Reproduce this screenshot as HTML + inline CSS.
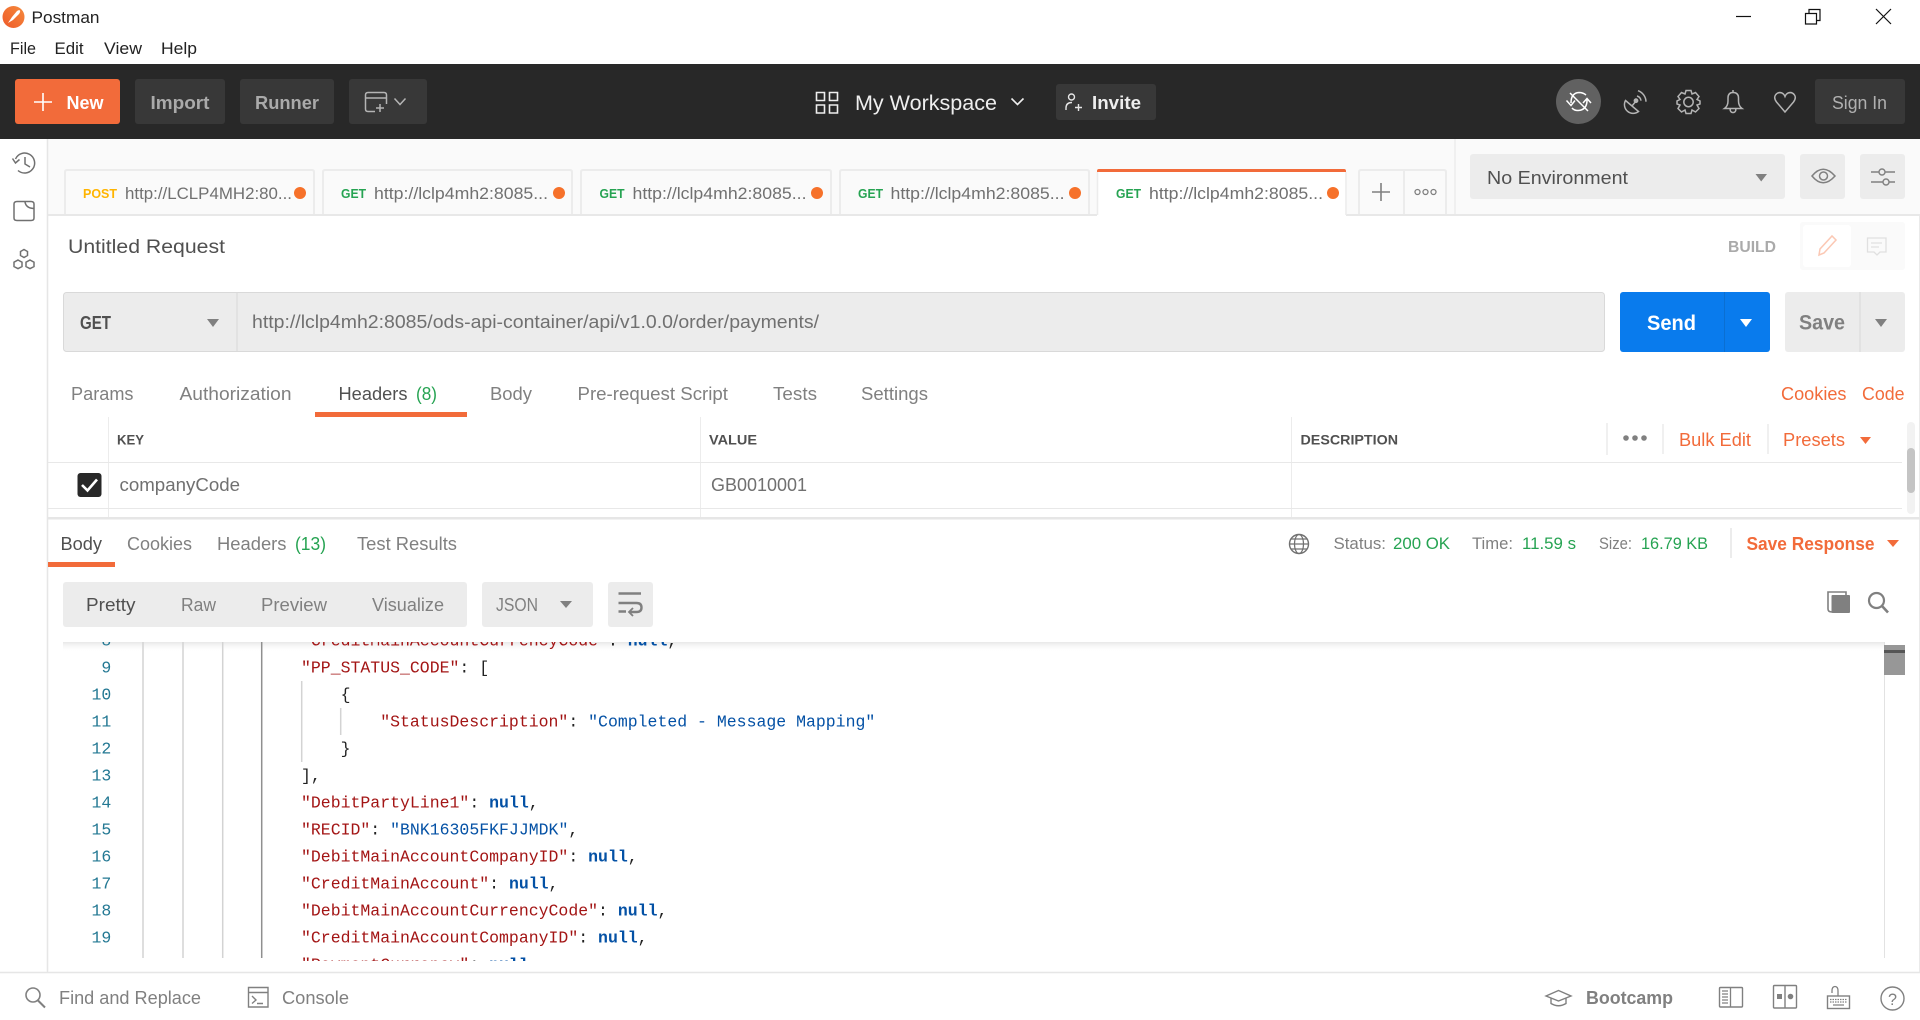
<!DOCTYPE html>
<html lang="en"><head><meta charset="utf-8"><title>Postman</title>
<style>
html,body{margin:0;padding:0;background:#fff;width:1920px;height:1020px;overflow:hidden}
svg{display:block}
text{font-family:"Liberation Sans",sans-serif;font-size:18px;fill:#808080;white-space:pre}
.b{font-weight:700}
.d{fill:#505050}
.o{fill:#f26b3a}
.g{fill:#26a352}
.u{font-size:17px;fill:#707070}
.m{font-size:13px;font-weight:700}
.h{font-size:13.5px;font-weight:700;fill:#505050}
.c{font-family:"Liberation Mono",monospace;font-size:16.5px;fill:#222}
.n{font-family:"Liberation Mono",monospace;font-size:16.5px;fill:#237893;text-anchor:end}
.k{fill:#a31515}.s{fill:#0451a5}.l{fill:#0451a5;font-weight:700}
.i{fill:none;stroke:#707070;stroke-width:1.5}
.w{fill:none;stroke:#b4b4b4;stroke-width:1.5}
</style></head><body>
<svg xmlns="http://www.w3.org/2000/svg" width="1920" height="1020" viewBox="0 0 1920 1020">
<defs>
<clipPath id="cc"><rect x="48" y="642" width="1836" height="319"/></clipPath>
<linearGradient id="sh" x1="0" y1="0" x2="0" y2="1"><stop offset="0" stop-color="#e8e8e8"/><stop offset="1" stop-color="#fff" stop-opacity="0"/></linearGradient>
<linearGradient id="lg" x1="1" y1="0" x2="0" y2="1"><stop offset="0" stop-color="#f58a3c"/><stop offset="1" stop-color="#ee5a2a"/></linearGradient>
</defs>

<!-- title bar -->
<circle cx="13.5" cy="17" r="11" fill="url(#lg)"/>
<path d="M8 23 L12 17 L17 11 Q19 9.500 20 10.500 Q20.500 12 19 14 L13 20 Z" fill="#fff"/>
<text x="31.500" y="23" style="font-size:16.5px;fill:#222" textLength="68" lengthAdjust="spacingAndGlyphs">Postman</text>
<g style="fill:#222">
<text x="10" y="54" style="font-size:16.5px;fill:#222" textLength="26" lengthAdjust="spacingAndGlyphs">File</text>
<text x="54.500" y="54" style="font-size:16.5px;fill:#222" textLength="29" lengthAdjust="spacingAndGlyphs">Edit</text>
<text x="104" y="54" style="font-size:16.5px;fill:#222" textLength="38" lengthAdjust="spacingAndGlyphs">View</text>
<text x="161" y="54" style="font-size:16.5px;fill:#222" textLength="36" lengthAdjust="spacingAndGlyphs">Help</text>
</g>
<path d="M1736 16.500 H1751" stroke="#111" stroke-width="1.200"/>
<path d="M1805.500 13.500 H1816.500 V24 H1805.500 Z M1809 13.500 V9.500 H1820 V20.500 H1816.500" fill="none" stroke="#111" stroke-width="1.200"/>
<path d="M1876 9 L1891 24 M1891 9 L1876 24" stroke="#111" stroke-width="1.200"/>

<!-- dark header -->
<rect x="0" y="64" width="1920" height="75" fill="#282828"/>
<rect x="15" y="79" width="105" height="45" rx="3" fill="#f26b3a"/>
<path d="M34 102 H52 M43 93 V111" stroke="#fff" stroke-width="1.600"/>
<text class="b" x="66.500" y="109" style="fill:#fff" textLength="37" lengthAdjust="spacingAndGlyphs">New</text>
<rect x="135" y="79" width="90" height="45" rx="3" fill="#383838"/>
<text class="b" x="150.500" y="109" style="fill:#aaa" textLength="59" lengthAdjust="spacingAndGlyphs">Import</text>
<rect x="240" y="79" width="94" height="45" rx="3" fill="#383838"/>
<text class="b" x="255" y="109" style="fill:#aaa" textLength="64" lengthAdjust="spacingAndGlyphs">Runner</text>
<rect x="349" y="79" width="78" height="45" rx="3" fill="#383838"/>
<path d="M375 111.500 H368 Q365.500 111.500 365.500 109 V95 Q365.500 92.500 368 92.500 H384 Q386.500 92.500 386.500 95 V104 M365.500 98 H386.500 M380 104 V112 M376 108 H384" class="w"/>
<path d="M394.500 98.500 L400 104.500 L405.500 98.500" class="w"/>

<path d="M816.500 92.500 h8 v8 h-8 z M829.500 92.500 h8 v8 h-8 z M816.500 105 h8 v8 h-8 z M829.500 105 h8 v8 h-8 z" fill="none" stroke="#eee" stroke-width="1.600"/>
<text x="855" y="110" style="font-size:21px;fill:#eee" textLength="142" lengthAdjust="spacingAndGlyphs">My Workspace</text>
<path d="M1011.500 98.500 L1017.500 104.500 L1023.500 98.500" fill="none" stroke="#eee" stroke-width="1.600"/>
<rect x="1056" y="84" width="100" height="36" rx="3" fill="#383838"/>
<circle cx="1071.500" cy="97" r="3" fill="none" stroke="#e6e6e6" stroke-width="1.400"/>
<path d="M1066 110 V108 Q1066 102.500 1072 102.500 M1075 107.500 H1082 M1078.500 104 V111" fill="none" stroke="#e6e6e6" stroke-width="1.400"/>
<text class="b" x="1092" y="109" style="fill:#eee" textLength="49" lengthAdjust="spacingAndGlyphs">Invite</text>

<ellipse cx="1578.500" cy="101.500" rx="22.500" ry="22.500" fill="#616161"/>
<path d="M1571 103 Q1571 93 1579 92.500 Q1583 92.500 1586 95 M1587 99 Q1587.500 110 1578 110.500 Q1574 110.500 1572 108 M1566.500 100.500 L1571 105.500 L1575 100.500 M1583 103 L1587 98.500 L1591 103 M1570 93 L1588 111" fill="none" stroke="#fff" stroke-width="1.500"/>
<path d="M1625.500 100.500 L1638.500 111.500 A8.700 8.700 0 0 1 1625.500 100.500 Z M1632 106 L1636 101 M1637 96 A5.500 5.500 0 0 1 1641 100.700 M1638 90.700 A12 12 0 0 1 1646 101.700" fill="none" stroke="#b4b4b4" stroke-width="1.500"/>
<circle cx="1636" cy="100.700" r="2.400" fill="#b4b4b4"/>
<path d="M1686 90.500 H1691 L1692 94 L1695.500 92.500 L1699 96.500 L1697 99.500 L1700 101 V104 L1697 105 L1699 108.500 L1695.500 112 L1692 110 L1691 113.500 H1686 L1685 110 L1681.500 112 L1678 108.500 L1680 105 L1677 104 V101 L1680 99.500 L1678 96.500 L1681.500 92.500 L1685 94 Z" class="w"/>
<circle cx="1688.500" cy="102" r="4.700" class="w"/>
<path d="M1724.500 108.500 Q1728 106 1728 101 V98 Q1728 92.500 1733 92.500 Q1738.500 92.500 1738.500 98 V101 Q1738.500 106 1742 108.500 Z M1733 90 V92.500 M1730.500 108.500 A2.800 2.800 0 1 0 1735.500 108.500" class="w"/>
<path d="M1785 112 L1776.500 102 Q1773.500 98 1775.500 95 Q1778 91.500 1782 93 Q1784 94 1785 96.500 Q1786 94 1788 93 Q1792 91.500 1794.500 95 Q1796.500 98 1793.500 102 Z" class="w"/>
<rect x="1815" y="79" width="90" height="45" rx="3" fill="#383838"/>
<text x="1832" y="109" style="fill:#b0b0b0" textLength="55" lengthAdjust="spacingAndGlyphs">Sign In</text>

<!-- tab strip -->
<rect x="48" y="139" width="1872" height="76" fill="#fafafa"/>
<path d="M47.500 139 V972" stroke="#e6e6e6" stroke-width="1.500"/>
<path d="M1919.500 216 V972" stroke="#eaeaea" stroke-width="1"/>
<path d="M1455 139 V215" stroke="#ececec" stroke-width="1.500"/>

<path d="M65 215 V172 Q65 170 67 170 H312 Q314 170 314 172 V215 M323 215 V172 Q323 170 325 170 H570 Q572 170 572 172 V215 M581 215 V172 Q581 170 583 170 H829 Q831 170 831 172 V215 M840 215 V172 Q840 170 842 170 H1087 Q1089 170 1089 172 V215" fill="none" stroke="#ececec" stroke-width="2"/>
<path d="M1359 215 V172 Q1359 170 1361 170 H1444 Q1446 170 1446 172 V215 M1404 170 V215" fill="none" stroke="#ececec" stroke-width="2"/>
<path d="M48 215 H1098 M1346 215 H1920" stroke="#e8e8e8" stroke-width="2"/>
<rect x="1097" y="170" width="249" height="46" fill="#fff"/>
<path d="M1097.500 215 V172 M1346 172 V215" stroke="#ececec" stroke-width="1.500"/>
<path d="M1097 172 V171 Q1097 169 1099 169 H1344 Q1346 169 1346 171 V172 Z" fill="#f26b3a"/>

<text class="m" x="83" y="198" style="fill:#ffb400" textLength="34" lengthAdjust="spacingAndGlyphs">POST</text>
<text class="u" x="125" y="199" textLength="167" lengthAdjust="spacingAndGlyphs">http://LCLP4MH2:80...</text>
<circle cx="300" cy="193" r="6" fill="#f6712a"/>
<text class="m g" x="341" y="198" textLength="25" lengthAdjust="spacingAndGlyphs">GET</text>
<text class="u" x="374" y="199" textLength="174" lengthAdjust="spacingAndGlyphs">http://lclp4mh2:8085...</text>
<circle cx="559" cy="193" r="6" fill="#f6712a"/>
<text class="m g" x="599.500" y="198" textLength="25" lengthAdjust="spacingAndGlyphs">GET</text>
<text class="u" x="632.500" y="199" textLength="174" lengthAdjust="spacingAndGlyphs">http://lclp4mh2:8085...</text>
<circle cx="817" cy="193" r="6" fill="#f6712a"/>
<text class="m g" x="858" y="198" textLength="25" lengthAdjust="spacingAndGlyphs">GET</text>
<text class="u" x="890.500" y="199" textLength="174" lengthAdjust="spacingAndGlyphs">http://lclp4mh2:8085...</text>
<circle cx="1075" cy="193" r="6" fill="#f6712a"/>
<text class="m g" x="1116" y="198" textLength="25" lengthAdjust="spacingAndGlyphs">GET</text>
<text class="u" x="1149" y="199" textLength="174" lengthAdjust="spacingAndGlyphs">http://lclp4mh2:8085...</text>
<circle cx="1333" cy="193" r="6" fill="#f6712a"/>
<path d="M1372 192 H1390 M1381 183 V201" stroke="#808080" stroke-width="1.600"/>
<circle cx="1417.500" cy="192" r="2.500" fill="none" stroke="#808080" stroke-width="1.300"/><circle cx="1425.500" cy="192" r="2.500" fill="none" stroke="#808080" stroke-width="1.300"/><circle cx="1433.500" cy="192" r="2.500" fill="none" stroke="#808080" stroke-width="1.300"/>

<rect x="1470" y="154" width="315" height="45" rx="3" fill="#ececec"/>
<text x="1487" y="184" class="d" textLength="141" lengthAdjust="spacingAndGlyphs">No Environment</text>
<path d="M1755.500 174 H1767 L1761.200 181.500 Z" fill="#808080"/>
<rect x="1800" y="154" width="45" height="45" rx="3" fill="#ececec"/>
<path d="M1812 176 Q1823 162.500 1835 176 Q1823 189.500 1812 176 Z" fill="none" stroke="#808080" stroke-width="1.500"/>
<circle cx="1823.500" cy="176" r="4" fill="none" stroke="#808080" stroke-width="1.500"/>
<rect x="1860" y="154" width="45" height="45" rx="3" fill="#ececec"/>
<path d="M1871 172 H1879 M1885 172 H1895 M1871 182 H1883 M1889 182 H1895" stroke="#808080" stroke-width="1.400"/>
<circle cx="1882" cy="172" r="3" fill="none" stroke="#808080" stroke-width="1.400"/><circle cx="1886" cy="182" r="3" fill="none" stroke="#808080" stroke-width="1.400"/>

<!-- sidebar icons -->
<path d="M15.500 159 A10 10 0 1 1 18 170.500 M12.500 158.500 L15.500 163 L19.500 159.500 M25 157 V164 L30 167" class="i"/>
<path d="M17 201.500 H31 Q34 201.500 34 204 V218 Q34 220.500 31 220.500 H17 Q14 220.500 14 218 V204 Q14 201.500 17 201.500 Z M25 202 Q26 208 33.500 208.500" class="i" style="stroke-linejoin:round"/>
<path d="M24 249.500 l3.500 2 v4 l-3.500 2 l-3.500 -2 v-4 Z M18 260 l4 2.200 v4.300 l-4 2.200 l-4 -2.200 v-4.300 Z M30 260 l4 2.200 v4.300 l-4 2.200 l-4 -2.200 v-4.300 Z" class="i"/>

<!-- request -->
<text x="68" y="253" class="d" style="font-size:19px" textLength="157" lengthAdjust="spacingAndGlyphs">Untitled Request</text>
<text class="b" x="1728" y="252" style="font-size:16px;fill:#aaa" textLength="48" lengthAdjust="spacingAndGlyphs">BUILD</text>
<rect x="1800" y="222" width="105" height="48" rx="3" fill="#fafafa"/>
<rect x="1803" y="225" width="48" height="42" rx="3" fill="#fff"/>
<path d="M1819 255 L1820 249 L1832 236 L1836 240 L1824 253 Z" fill="none" stroke="#fbc8b4" stroke-width="1.500"/>
<path d="M1867.500 238 H1886 V252 H1880 L1877 255 L1874 252 H1867.500 Z M1871 243 H1882 M1871 247 H1879" fill="none" stroke="#e0e0e0" stroke-width="1.300"/>

<rect x="63.500" y="292.500" width="1541" height="59" rx="3" fill="#ececec" stroke="#d9d9d9"/>
<path d="M237 293 V351" stroke="#d9d9d9"/>
<text class="b d" x="80" y="329" textLength="31" lengthAdjust="spacingAndGlyphs">GET</text>
<path d="M207 319 H219 L213 327 Z" fill="#808080"/>
<text x="252" y="328" style="fill:#707070" textLength="567" lengthAdjust="spacingAndGlyphs">http://lclp4mh2:8085/ods-api-container/api/v1.0.0/order/payments/</text>

<rect x="1620" y="292" width="150" height="60" rx="3" fill="#097bed"/>
<path d="M1724.500 292 V352" stroke="#0a6fd2"/>
<text class="b" x="1647" y="330" style="font-size:21px;fill:#fff" textLength="49" lengthAdjust="spacingAndGlyphs">Send</text>
<path d="M1740 319 H1752 L1746 327 Z" fill="#fff"/>
<rect x="1785" y="292" width="120" height="60" rx="3" fill="#ececec"/>
<path d="M1860 292 V352" stroke="#d9d9d9"/>
<text class="b" x="1799" y="329.500" style="font-size:21px" textLength="46" lengthAdjust="spacingAndGlyphs">Save</text>
<path d="M1875 319 H1887 L1881 327 Z" fill="#808080"/>

<text x="71" y="400" textLength="62.500" lengthAdjust="spacingAndGlyphs">Params</text>
<text x="179.500" y="400" textLength="112" lengthAdjust="spacingAndGlyphs">Authorization</text>
<text x="338.500" y="400" class="d" textLength="69" lengthAdjust="spacingAndGlyphs">Headers</text>
<text x="416" y="400" class="g" textLength="21" lengthAdjust="spacingAndGlyphs">(8)</text>
<rect x="315" y="412" width="152" height="5" fill="#f26b3a"/>
<text x="490" y="400" textLength="42" lengthAdjust="spacingAndGlyphs">Body</text>
<text x="577.500" y="400" textLength="150.500" lengthAdjust="spacingAndGlyphs">Pre-request Script</text>
<text x="773" y="400" textLength="44" lengthAdjust="spacingAndGlyphs">Tests</text>
<text x="861" y="400" textLength="67" lengthAdjust="spacingAndGlyphs">Settings</text>
<text x="1781" y="400" class="o" textLength="65.500" lengthAdjust="spacingAndGlyphs">Cookies</text>
<text x="1862" y="400" class="o" textLength="42.500" lengthAdjust="spacingAndGlyphs">Code</text>

<!-- headers table -->
<path d="M108.500 417 V518 M700.500 417 V518 M1291.500 417 V518" stroke="#ececec"/>
<path d="M48 462.500 H1902 M48 508.500 H1902" stroke="#e8e8e8"/>
<text class="h" x="117" y="444.500" textLength="27" lengthAdjust="spacingAndGlyphs">KEY</text>
<text class="h" x="709" y="444.500" textLength="48" lengthAdjust="spacingAndGlyphs">VALUE</text>
<text class="h" x="1300.500" y="444.500" textLength="97.500" lengthAdjust="spacingAndGlyphs">DESCRIPTION</text>
<path d="M1607 423 V455 M1663 424 V454 M1768 424 V454" stroke="#ececec" stroke-width="1.500"/>
<circle cx="1626" cy="438" r="2.800" fill="#808080"/><circle cx="1635" cy="438" r="2.800" fill="#808080"/><circle cx="1644" cy="438" r="2.800" fill="#808080"/>
<text x="1679" y="446" class="o" textLength="72" lengthAdjust="spacingAndGlyphs">Bulk Edit</text>
<text x="1783" y="446" class="o" textLength="62" lengthAdjust="spacingAndGlyphs">Presets</text>
<path d="M1860 437 H1871 L1865.500 444 Z" fill="#f26b3a"/>
<rect x="1907" y="422" width="8" height="92" rx="4" fill="#f2f2f2"/>
<rect x="1907" y="448" width="8" height="45" rx="4" fill="#c4c4c4"/>
<rect x="77.500" y="473" width="24" height="24" rx="3" fill="#282828"/>
<path d="M82 485 L87.500 490.500 L97 479.500" fill="none" stroke="#fff" stroke-width="2.600"/>
<text x="119.500" y="491" style="fill:#707070" textLength="120.500" lengthAdjust="spacingAndGlyphs">companyCode</text>
<text x="711" y="491" style="fill:#707070" textLength="96" lengthAdjust="spacingAndGlyphs">GB0010001</text>

<!-- response -->
<rect x="48" y="517" width="1872" height="2.500" fill="#e6e6e6"/>
<text x="60.500" y="550" class="d" textLength="41.500" lengthAdjust="spacingAndGlyphs">Body</text>
<rect x="48" y="562" width="67" height="5" fill="#f26b3a"/>
<text x="127" y="550" textLength="65" lengthAdjust="spacingAndGlyphs">Cookies</text>
<text x="217" y="550" textLength="69.500" lengthAdjust="spacingAndGlyphs">Headers</text>
<text x="295" y="550" class="g" textLength="31" lengthAdjust="spacingAndGlyphs">(13)</text>
<text x="357" y="550" textLength="100" lengthAdjust="spacingAndGlyphs">Test Results</text>

<circle cx="1299" cy="544" r="9.500" fill="none" stroke="#707070" stroke-width="1.400"/>
<ellipse cx="1299" cy="544" rx="4.500" ry="9.500" fill="none" stroke="#707070" stroke-width="1.200"/>
<path d="M1289.500 544 H1308.500 M1291 539 H1307 M1291 549 H1307" stroke="#707070" stroke-width="1.200"/>
<text x="1333.500" y="549" style="font-size:17px" textLength="52.500" lengthAdjust="spacingAndGlyphs">Status:</text>
<text x="1393" y="549" class="g" style="font-size:17px" textLength="57" lengthAdjust="spacingAndGlyphs">200 OK</text>
<text x="1472" y="549" style="font-size:17px" textLength="41" lengthAdjust="spacingAndGlyphs">Time:</text>
<text x="1522" y="549" class="g" style="font-size:17px" textLength="54" lengthAdjust="spacingAndGlyphs">11.59 s</text>
<text x="1599" y="549" style="font-size:17px" textLength="33" lengthAdjust="spacingAndGlyphs">Size:</text>
<text x="1641" y="549" class="g" style="font-size:17px" textLength="67" lengthAdjust="spacingAndGlyphs">16.79 KB</text>
<path d="M1731 528 V558" stroke="#e6e6e6" stroke-width="1.500"/>
<text x="1746.500" y="550" class="b o" textLength="128" lengthAdjust="spacingAndGlyphs">Save Response</text>
<path d="M1887 540 H1899 L1893 547 Z" fill="#f26b3a"/>

<rect x="63" y="582" width="404" height="45" rx="3" fill="#ececec"/>
<text x="86" y="611" class="d" textLength="49.500" lengthAdjust="spacingAndGlyphs">Pretty</text>
<text x="181" y="611" textLength="35" lengthAdjust="spacingAndGlyphs">Raw</text>
<text x="261" y="611" textLength="66" lengthAdjust="spacingAndGlyphs">Preview</text>
<text x="372" y="611" textLength="72" lengthAdjust="spacingAndGlyphs">Visualize</text>
<rect x="482" y="582" width="111" height="45" rx="3" fill="#ececec"/>
<text x="496" y="611" textLength="42" lengthAdjust="spacingAndGlyphs">JSON</text>
<path d="M560 601 H572 L566 608 Z" fill="#808080"/>
<rect x="608" y="582" width="45" height="45" rx="3" fill="#ececec"/>
<path d="M618.500 593.500 H641 M618.500 603 H636.500 Q641.500 603 641.500 607.500 Q641.500 612 636.500 612 H630 M618.500 611.500 H626" fill="none" stroke="#808080" stroke-width="2.400"/>
<path d="M633 608 L629 612 L633 616" fill="none" stroke="#808080" stroke-width="1.800"/>
<path d="M1832 612 Q1828 612 1828 609 V592 H1846 V595" fill="none" stroke="#808080" stroke-width="1.600"/>
<rect x="1831.500" y="595" width="18.500" height="18" rx="1" fill="#808080"/>
<circle cx="1876.500" cy="600.500" r="7.500" fill="none" stroke="#808080" stroke-width="2.200"/>
<path d="M1882 606 L1888 612.500" stroke="#808080" stroke-width="2.600"/>

<!-- code -->
<rect x="63" y="642" width="1821" height="10" fill="url(#sh)"/>
<g clip-path="url(#cc)">
<path d="M143 642 V958 M183 642 V958 M222.700 642 V958" stroke="#d3d3d3" stroke-width="1.500"/>
<path d="M261.700 642 V958" stroke="#8f8f8f" stroke-width="1.500"/>
<path d="M301.700 681 V762 M340.700 708 V735" stroke="#d3d3d3" stroke-width="1.500"/>
<g transform="translate(-0.7,-0.7)">
<text class="n" x="112" y="646">8</text>
<text class="n" x="112" y="673">9</text>
<text class="n" x="112" y="700">10</text>
<text class="n" x="112" y="727">11</text>
<text class="n" x="112" y="754">12</text>
<text class="n" x="112" y="781">13</text>
<text class="n" x="112" y="808">14</text>
<text class="n" x="112" y="835">15</text>
<text class="n" x="112" y="862">16</text>
<text class="n" x="112" y="889">17</text>
<text class="n" x="112" y="916">18</text>
<text class="n" x="112" y="943">19</text>
<text class="c" x="301.700" y="646"><tspan class="k">"CreditMainAccountCurrencyCode"</tspan>: <tspan class="l">null</tspan>,</text>
<text class="c" x="301.700" y="673"><tspan class="k">"PP_STATUS_CODE"</tspan>: [</text>
<text class="c" x="341.300" y="700">{</text>
<text class="c" x="380.900" y="727"><tspan class="k">"StatusDescription"</tspan>: <tspan class="s">"Completed - Message Mapping"</tspan></text>
<text class="c" x="341.300" y="754">}</text>
<text class="c" x="301.700" y="781">],</text>
<text class="c" x="301.700" y="808"><tspan class="k">"DebitPartyLine1"</tspan>: <tspan class="l">null</tspan>,</text>
<text class="c" x="301.700" y="835"><tspan class="k">"RECID"</tspan>: <tspan class="s">"BNK16305FKFJJMDK"</tspan>,</text>
<text class="c" x="301.700" y="862"><tspan class="k">"DebitMainAccountCompanyID"</tspan>: <tspan class="l">null</tspan>,</text>
<text class="c" x="301.700" y="889"><tspan class="k">"CreditMainAccount"</tspan>: <tspan class="l">null</tspan>,</text>
<text class="c" x="301.700" y="916"><tspan class="k">"DebitMainAccountCurrencyCode"</tspan>: <tspan class="l">null</tspan>,</text>
<text class="c" x="301.700" y="943"><tspan class="k">"CreditMainAccountCompanyID"</tspan>: <tspan class="l">null</tspan>,</text>
<text class="c" x="301.700" y="970"><tspan class="k">"PaymentCurrency"</tspan>: <tspan class="l">null</tspan>,</text>
</g>
</g>
<path d="M1884.500 642 V958" stroke="#e2e2e2"/>
<rect x="1884" y="645" width="21" height="30" fill="#979797"/>
<rect x="1884" y="650" width="21" height="3" fill="#555"/>

<!-- status bar -->
<path d="M0 972.500 H1920" stroke="#e6e6e6" stroke-width="1.500"/>
<circle cx="33" cy="995" r="7" fill="none" stroke="#808080" stroke-width="1.600"/>
<path d="M38 1000.500 L45 1007.500" stroke="#808080" stroke-width="2"/>
<text x="59" y="1004" textLength="142" lengthAdjust="spacingAndGlyphs">Find and Replace</text>
<path d="M248.500 987.500 H268 V1007 H248.500 Z M248.500 992.500 H268 M252 996 L256 1000 L252 1003.500 M257 1003.500 H263" fill="none" stroke="#808080" stroke-width="1.400"/>
<text x="282" y="1004" textLength="67" lengthAdjust="spacingAndGlyphs">Console</text>
<path d="M1546 996 L1558.500 990.500 L1571 996 L1558.500 1001 Z M1551 998.500 V1003.500 Q1558.500 1008 1566 1003.500 V998.500" fill="none" stroke="#808080" stroke-width="1.400"/>
<text class="b" x="1586" y="1004" textLength="87" lengthAdjust="spacingAndGlyphs">Bootcamp</text>
<rect x="1719.500" y="987.500" width="23" height="19.500" rx="1" fill="none" stroke="#808080" stroke-width="1.400"/>
<path d="M1730.500 987.500 V1007 M1722 991 H1728 M1722 994 H1728 M1722 997 H1728 M1722 1000 H1728 M1722 1003 H1728" stroke="#808080" stroke-width="1.300"/>
<rect x="1773.500" y="985.500" width="23" height="22.500" rx="1" fill="none" stroke="#808080" stroke-width="1.400"/>
<path d="M1785 985.500 V1008" stroke="#808080" stroke-width="1.400"/>
<rect x="1777" y="994" width="5" height="5" fill="#808080"/><circle cx="1790.500" cy="996.500" r="2.800" fill="#808080"/>
<rect x="1827.500" y="996" width="22" height="12.500" fill="none" stroke="#808080" stroke-width="1.400"/>
<path d="M1830 999.500 H1847 M1830 1002 H1847" stroke="#808080" stroke-width="1.300" stroke-dasharray="1.500 1"/>
<path d="M1833 1005 H1844 M1838 996 V991 Q1838 986.500 1835 986.500 Q1832 986.500 1832 991 V993" fill="none" stroke="#808080" stroke-width="1.300"/>
<circle cx="1892.500" cy="998.500" r="11.500" fill="none" stroke="#808080" stroke-width="1.400"/>
<text x="1888" y="1005" style="font-size:17px" textLength="9" lengthAdjust="spacingAndGlyphs">?</text>
</svg>
</body></html>
